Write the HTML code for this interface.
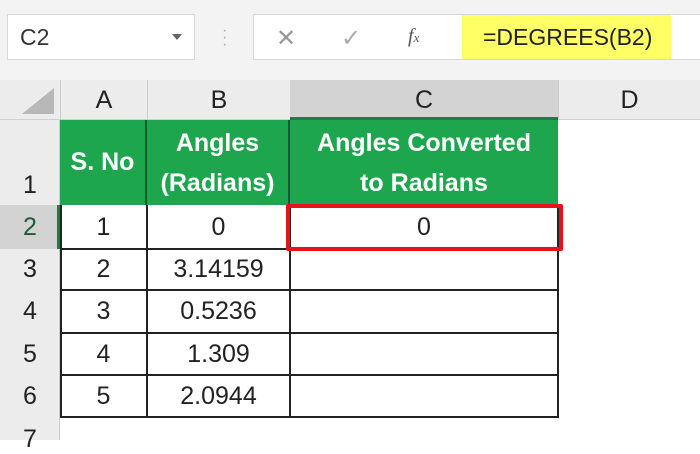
<!DOCTYPE html><html><head><style>
body{margin:0;width:700px;height:450px;overflow:hidden;background:#fff;font-family:"Liberation Sans Narrow","Liberation Sans",sans-serif;position:relative}
.a{position:absolute;box-sizing:border-box}
.t{display:flex;align-items:center;justify-content:center;font-size:25px;color:#222}
.g{background:#1ea64f;color:#fff;font-weight:bold;font-size:25px;text-align:center;line-height:40px}
</style></head><body>
<div class="a" style="left:0;top:0;width:700px;height:80px;background:#f3f3f3"></div>
<div class="a" style="left:7px;top:14px;width:188px;height:46px;background:#fff;border:1px solid #d8d8d8"></div>
<div class="a" style="left:20px;top:24px;font-size:23px;color:#333">C2</div>
<div class="a" style="left:172px;top:34px;width:0;height:0;border-left:5px solid transparent;border-right:5px solid transparent;border-top:6px solid #666"></div>
<div class="a" style="left:222px;top:27px;color:#aaa;font-size:16px;line-height:7px">·<br>·<br>·</div>
<div class="a" style="left:253px;top:14px;width:460px;height:46px;background:#fff;border:1px solid #d8d8d8"></div>
<div class="a" style="left:276px;top:24px;font-size:24px;color:#999">✕</div>
<div class="a" style="left:341px;top:24px;font-size:24px;color:#aaa">✓</div>
<div class="a" style="left:408px;top:25px;font-size:20px;color:#555;font-style:italic;font-family:'Liberation Serif',serif">f<span style="font-size:13px">x</span></div>
<div class="a" style="left:462px;top:15px;width:209px;height:44px;background:#ffff66"></div>
<div class="a" style="left:483px;top:24px;font-size:23px;color:#222">=DEGREES(B2)</div>
<div class="a" style="left:0;top:80px;width:700px;height:40px;background:#ececec;border-bottom:1px solid #d0d0d0"></div>
<div class="a" style="left:290px;top:80px;width:268px;height:40px;background:#d3d3d3;border-bottom:3px solid #1e7d45"></div>
<div class="a" style="left:22px;top:88px;width:0;height:0;border-left:32px solid transparent;border-bottom:26px solid #b8b8b8"></div>
<div class="a t" style="left:60px;top:80px;width:87px;height:40px;border-left:1px solid #ccc">A</div>
<div class="a t" style="left:147px;top:80px;width:143px;height:40px;border-left:1px solid #ccc">B</div>
<div class="a t" style="left:290px;top:80px;width:268px;height:40px">C</div>
<div class="a t" style="left:558px;top:80px;width:142px;height:40px;border-left:1px solid #ccc">D</div>
<div class="a" style="left:0;top:120px;width:60px;height:320px;background:#ececec;border-right:1px solid #ccc"></div>
<div class="a" style="left:0;top:205px;width:60px;height:44px;background:#d3d3d3;border-right:3px solid #1e7d45"></div>
<div class="a t" style="left:0;top:165px;width:60px;height:40px">1</div>
<div class="a t" style="left:0;top:205px;width:60px;height:44px;color:#1e5c38">2</div>
<div class="a t" style="left:0;top:249px;width:60px;height:41px">3</div>
<div class="a t" style="left:0;top:290px;width:60px;height:43px">4</div>
<div class="a t" style="left:0;top:333px;width:60px;height:42px">5</div>
<div class="a t" style="left:0;top:375px;width:60px;height:42px">6</div>
<div class="a t" style="left:0;top:417px;width:60px;height:30px;align-items:flex-start;padding-top:8px">7</div>
<div class="a g" style="left:60px;top:120px;width:87px;height:85px;line-height:85px;border-right:2px solid #145c30">S. No</div>
<div class="a g" style="left:147px;top:120px;width:143px;height:85px;padding-top:3px;border-right:2px solid #145c30">Angles<br>(Radians)</div>
<div class="a g" style="left:290px;top:120px;width:268px;height:85px;padding-top:3px">Angles Converted<br>to Radians</div>
<div class="a" style="left:60px;top:205px;width:499px;height:213px;border:2px solid #222;border-top:none"></div>
<div class="a" style="left:146px;top:205px;width:2px;height:212px;background:#222"></div>
<div class="a" style="left:289px;top:205px;width:2px;height:212px;background:#222"></div>
<div class="a" style="left:60px;top:248px;width:498px;height:2px;background:#222"></div>
<div class="a" style="left:60px;top:289px;width:498px;height:2px;background:#222"></div>
<div class="a" style="left:60px;top:332px;width:498px;height:2px;background:#222"></div>
<div class="a" style="left:60px;top:374px;width:498px;height:2px;background:#222"></div>
<div class="a t" style="left:60px;top:205px;width:87px;height:44px">1</div>
<div class="a t" style="left:147px;top:205px;width:143px;height:44px">0</div>
<div class="a t" style="left:290px;top:205px;width:268px;height:44px">0</div>
<div class="a t" style="left:60px;top:249px;width:87px;height:41px">2</div>
<div class="a t" style="left:147px;top:249px;width:143px;height:41px">3.14159</div>
<div class="a t" style="left:60px;top:290px;width:87px;height:43px">3</div>
<div class="a t" style="left:147px;top:290px;width:143px;height:43px">0.5236</div>
<div class="a t" style="left:60px;top:333px;width:87px;height:42px">4</div>
<div class="a t" style="left:147px;top:333px;width:143px;height:42px">1.309</div>
<div class="a t" style="left:60px;top:375px;width:87px;height:42px">5</div>
<div class="a t" style="left:147px;top:375px;width:143px;height:42px">2.0944</div>
<div class="a" style="left:286px;top:204px;width:277px;height:47px;border:4px solid #e8121b;border-radius:2px"></div>
</body></html>
